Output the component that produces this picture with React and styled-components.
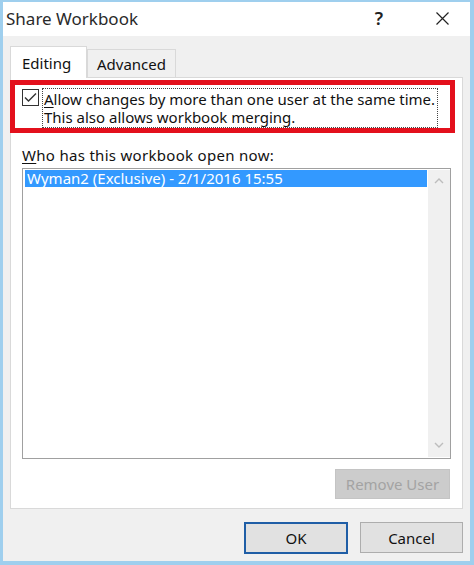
import React from "react";
import styled, { createGlobalStyle } from "styled-components";

const GlobalStyle = createGlobalStyle`
  html, body {
    margin: 0;
    padding: 0;
    background: #ffffff;
  }
  body {
    font-family: "Noto Sans", "Liberation Sans", sans-serif;
    color: #1a1a1a;
  }
`;

const Window = styled.div`
  box-sizing: border-box;
  width: 474px;
  height: 565px;
  display: flex;
  flex-direction: column;
  border-style: solid;
  border-color: #9fcfee;
  border-width: 2px 4px 4px 3px;
  background: #f0f0f0;
`;

const TitleBar = styled.div`
  height: 34px;
  flex: none;
  display: flex;
  align-items: center;
  background: #ffffff;
  padding-left: 3px;
`;

const Title = styled.div`
  flex: 1;
  font-size: 17px;
  color: #2a2a2a;
  margin-top: -2px;
`;

const TitleButton = styled.div`
  width: ${(p) => p.$w}px;
  margin-right: ${(p) => p.$mr}px;
  display: flex;
  justify-content: center;
  align-items: center;
  font-size: 18px;
  font-weight: 600;
  color: #222;
  margin-top: -2px;
`;

const Body = styled.div`
  flex: 1;
  display: flex;
  flex-direction: column;
  padding: 10px 7px 0 7px;
`;

const TabStrip = styled.div`
  display: flex;
  align-items: flex-end;
  height: 31px;
`;

const Tab = styled.div`
  box-sizing: border-box;
  width: ${(p) => p.$w}px;
  height: ${(p) => (p.$active ? 32 : 28)}px;
  padding-left: ${(p) => p.$pad}px;
  display: flex;
  align-items: center;
  font-size: 15px;
  background: ${(p) => (p.$active ? "#ffffff" : "#f0f0f0")};
  border: 1px solid #d9d9d9;
  border-bottom: none;
  margin-bottom: ${(p) => (p.$active ? -1 : 0)}px;
  position: relative;
  z-index: ${(p) => (p.$active ? 1 : 0)};
  color: #111;
`;

const Panel = styled.div`
  box-sizing: border-box;
  height: 432px;
  background: #ffffff;
  border: 1px solid #d9d9d9;
  display: flex;
  flex-direction: column;
`;

const Highlight = styled.div`
  box-sizing: border-box;
  height: 53px;
  margin: 2px 7px 0 -1px;
  border: 5px solid #e3101c;
  display: flex;
  align-items: flex-start;
  padding: 3px 0 0 7px;
  position: relative;
  z-index: 2;
`;

const Checkbox = styled.div`
  box-sizing: border-box;
  width: 17px;
  height: 17px;
  margin-top: 1px;
  border: 1px solid #333;
  background: #fff;
  flex: none;
  display: flex;
  align-items: center;
  justify-content: center;
`;

const FocusText = styled.div`
  margin-left: 3px;
  padding: 1px 0 0 1px;
  width: 396px;
  height: 40px;
  box-sizing: border-box;
  border: 1px dotted #444;
  font-size: 15px;
  white-space: nowrap;
  color: #111;
`;

const Line = styled.div`
  height: 18px;
  line-height: 18px;
  overflow: visible;
`;

const Mnemonic = styled.span`
  display: inline-block;
  line-height: inherit;
  text-decoration: underline;
  text-underline-offset: 2px;
`;

const Label = styled.div`
  font-size: 15px;
  margin: 12px 0 0 11px;
  line-height: 20px;
  letter-spacing: 0.3px;
  color: #111;
`;

const ListBox = styled.div`
  box-sizing: border-box;
  height: 291px;
  margin: 3px 11px 0 11px;
  border: 1px solid #a0a0a0;
  display: flex;
  background: #fff;
`;

const Rows = styled.div`
  flex: 1;
  padding: 1px 0 0 2px;
`;

const Row = styled.div`
  height: 17px;
  line-height: 17px;
  font-size: 15px;
  padding-left: 2px;
  background: ${(p) => (p.$selected ? "#3399ff" : "transparent")};
  color: ${(p) => (p.$selected ? "#ffffff" : "#111")};
`;

const ScrollBar = styled.div`
  width: 22px;
  margin: 1px 0 1px 1px;
  background: #f0f0f0;
  display: flex;
  flex-direction: column;
  justify-content: space-between;
  align-items: center;
  padding: 8px 0 9px;
`;

const PanelActions = styled.div`
  display: flex;
  justify-content: flex-end;
  margin: 10px 12px 0 0;
`;

const Button = styled.div`
  box-sizing: border-box;
  width: ${(p) => p.$w}px;
  height: ${(p) => p.$h}px;
  display: flex;
  align-items: center;
  justify-content: center;
  font-size: 15px;
  background: ${(p) => (p.$disabled ? "#cccccc" : "#e1e1e1")};
  color: ${(p) => (p.$disabled ? "#a3a3a3" : "#111")};
  border: ${(p) =>
    p.$default ? "2px solid #1f5ea6" : p.$disabled ? "1px solid #c4c4c4" : "1px solid #adadad"};
`;

const Footer = styled.div`
  display: flex;
  justify-content: flex-end;
  gap: 12px;
  margin-top: 13px;
`;

const Chevron = ({ up }) => (
  <svg width="10" height="6" viewBox="0 0 10 6">
    <path
      d={up ? "M1 5 L5 1 L9 5" : "M1 1 L5 5 L9 1"}
      fill="none"
      stroke="#bdbdbd"
      strokeWidth="1.4"
    />
  </svg>
);

export default function App() {
  return (
    <>
      <GlobalStyle />
      <Window>
        <TitleBar>
          <Title>Share Workbook</Title>
          <TitleButton $w={16} $mr={48}>?</TitleButton>
          <TitleButton $w={14} $mr={21}>
            <svg width="13" height="13" viewBox="0 0 13 13">
              <path d="M0.5 0.5 L12.5 12.5 M12.5 0.5 L0.5 12.5" stroke="#222" strokeWidth="1.2" />
            </svg>
          </TitleButton>
        </TitleBar>
        <Body>
          <TabStrip>
            <Tab $active $w={77} $pad={11}>Editing</Tab>
            <Tab $w={89} $pad={9}>Advanced</Tab>
          </TabStrip>
          <Panel>
            <Highlight>
              <Checkbox>
                <svg width="13" height="11" viewBox="0 0 13 11">
                  <path d="M1 5.5 L4.5 9 L12 1.5" fill="none" stroke="#333" strokeWidth="1.4" />
                </svg>
              </Checkbox>
              <FocusText>
                <Line>
                  <Mnemonic>A</Mnemonic>llow changes by more than one user at the same time.
                </Line>
                <Line>This also allows workbook merging.</Line>
              </FocusText>
            </Highlight>
            <Label>
              <Mnemonic>W</Mnemonic>ho has this workbook open now:
            </Label>
            <ListBox>
              <Rows>
                <Row $selected>Wyman2 (Exclusive) - 2/1/2016 15:55</Row>
              </Rows>
              <ScrollBar>
                <Chevron up />
                <Chevron />
              </ScrollBar>
            </ListBox>
            <PanelActions>
              <Button $w={115} $h={30} $disabled>Remove User</Button>
            </PanelActions>
          </Panel>
          <Footer>
            <Button $w={104} $h={32} $default>OK</Button>
            <Button $w={103} $h={31}>Cancel</Button>
          </Footer>
        </Body>
      </Window>
    </>
  );
}
